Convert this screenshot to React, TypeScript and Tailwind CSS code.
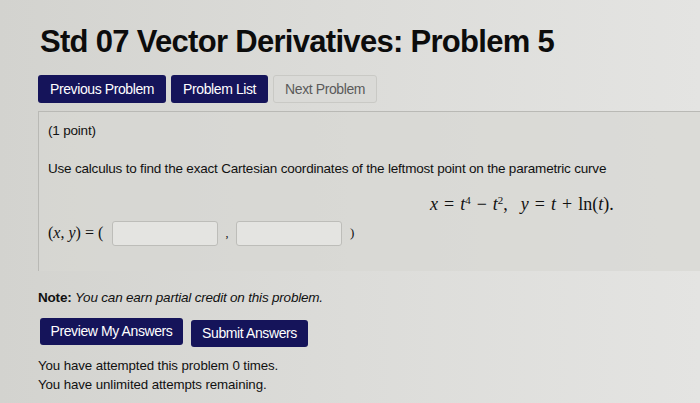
import React from "react";

const navBtn =
  "rounded-[3px] bg-[#15145a] px-[12px] h-[28px] flex items-center text-[14px] tracking-[-0.4px] text-white";
const mathFont = { fontFamily: '"Liberation Serif", "DejaVu Serif", serif' };

function Op({ children }: { children: React.ReactNode }) {
  return <span className="px-[6px]">{children}</span>;
}

export default function App() {
  return (
    <div
      className="h-[403px] w-[700px] overflow-hidden bg-gradient-to-r from-[#d3d3cf] via-[#dcdcd9] to-[#e4e4e2] text-[#111]"
      style={{ fontFamily: '"Liberation Sans", Arial, sans-serif' }}
    >
      <div className="pl-[38px] pt-[22px]">
        <h1 className="pl-[2px] text-[31px] leading-[40px] font-bold tracking-[-0.7px] text-[#0c0c0c]">
          Std 07 Vector Derivatives: Problem 5
        </h1>

        <div className="mt-[13px] flex gap-[5px]">
          <button className={navBtn}>Previous Problem</button>
          <button className={navBtn}>Problem List</button>
          <button className="flex h-[28px] items-center rounded-[3px] border border-[#c9c9c5] bg-[#dadad7] px-[11px] text-[14px] tracking-[-0.4px] text-[#5a5a5a]">
            Next Problem
          </button>
        </div>

        <div className="mt-[8px] h-[160px] border-t border-l border-[#b9b9b5] bg-[#d7d7d3]/70 pl-[9px] pt-[9px] text-[13.5px] tracking-[-0.2px]">
          <p>(1 point)</p>
          <p className="mt-[18px]">
            Use calculus to find the exact Cartesian coordinates of the leftmost point on the parametric curve
          </p>
          <p className="mt-[13px] pl-[382px] text-[18px] leading-[22px] tracking-normal" style={mathFont}>
            <i>x</i>
            <Op>=</Op>
            <i>t</i>
            <sup className="text-[11px]">4</sup>
            <Op>−</Op>
            <i>t</i>
            <sup className="text-[11px]">2</sup>,<span className="pl-[13px]" />
            <i>y</i>
            <Op>=</Op>
            <i>t</i>
            <Op>+</Op>ln(<i>t</i>).
          </p>
          <div className="mt-[6px] flex items-center text-[16px] tracking-normal" style={mathFont}>
            <span className="w-[64px]">
              (<i>x</i>, <i>y</i>) = (
            </span>
            <span className="h-[25px] w-[106px] rounded-[3px] border border-[#bdbdb9] bg-[#e4e4e1]" />
            <span className="w-[18px] text-center text-[12px]">,</span>
            <span className="h-[25px] w-[106px] rounded-[3px] border border-[#bdbdb9] bg-[#e4e4e1]" />
            <span className="pl-[8px] text-[13px]">)</span>
          </div>
        </div>

        <p className="mt-[17px] text-[13.5px] tracking-[-0.2px]">
          <b>Note:</b> <i>You can earn partial credit on this problem.</i>
        </p>

        <div className="mt-[10px] flex items-start gap-[8px] pl-[2px]">
          <button className="flex h-[27px] w-[143px] items-center justify-center rounded-[3px] bg-[#15145a] text-[14px] tracking-[-0.4px] text-white">
            Preview My Answers
          </button>
          <button className="mt-[2px] flex h-[27px] w-[117px] items-center justify-center rounded-[3px] bg-[#15145a] text-[14px] tracking-[-0.4px] text-white">
            Submit Answers
          </button>
        </div>

        <div className="mt-[9px] text-[13.3px] leading-[19px] tracking-[-0.1px]">
          <p>You have attempted this problem 0 times.</p>
          <p>You have unlimited attempts remaining.</p>
        </div>
      </div>
    </div>
  );
}
